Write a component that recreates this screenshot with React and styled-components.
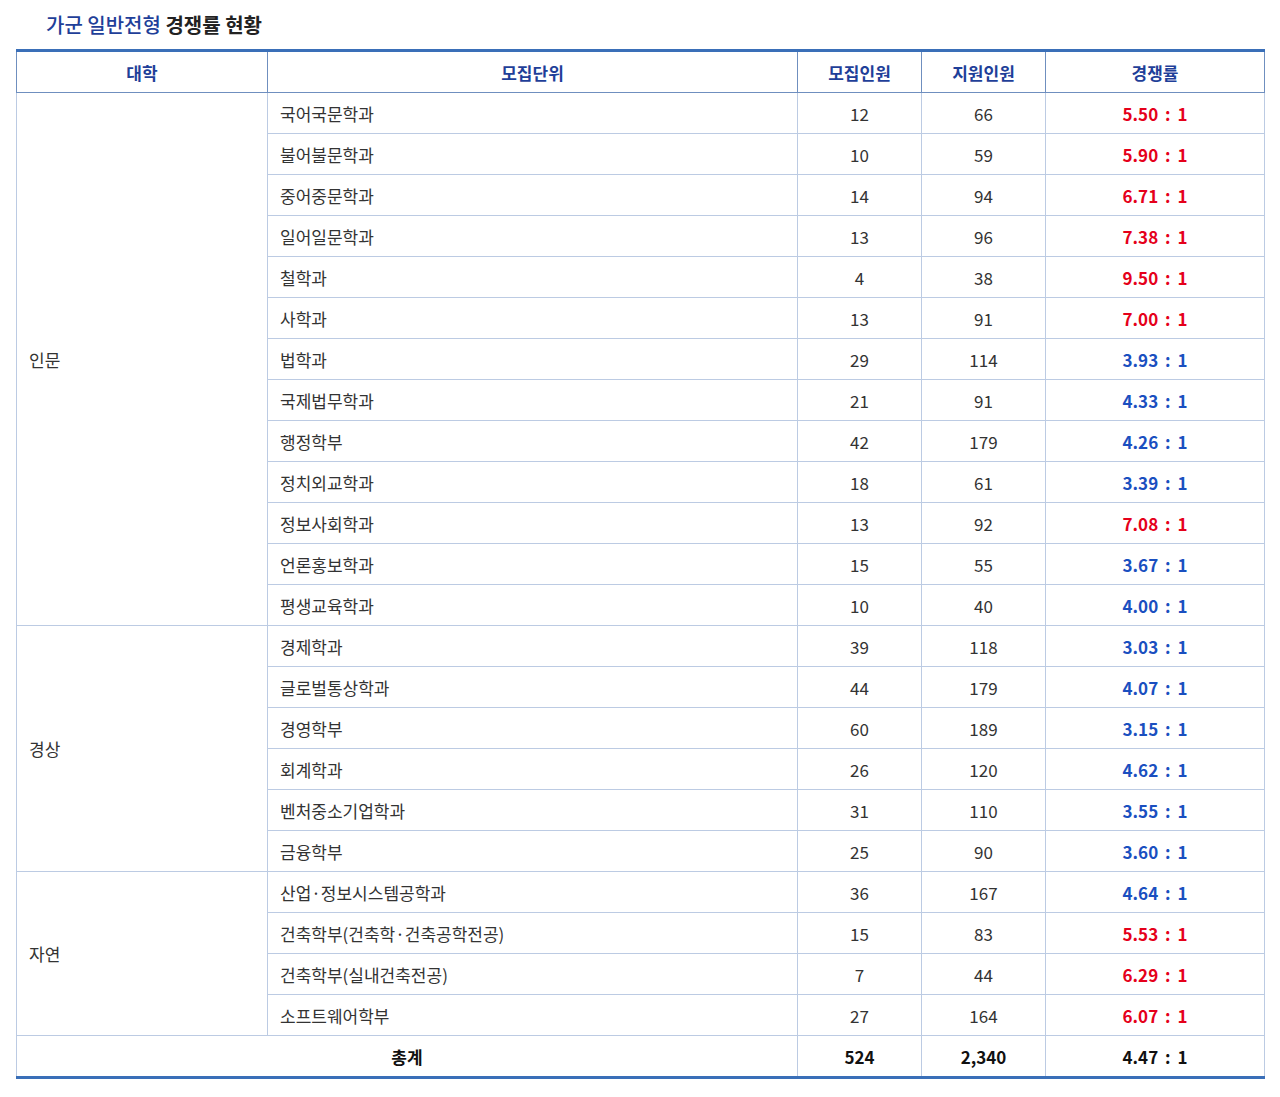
import styled, { createGlobalStyle } from 'styled-components';

const Global = createGlobalStyle`
  body { margin: 0; background: #fff; font-family: "Noto Sans CJK KR", "Noto Sans", sans-serif; }
`;

const Page = styled.div`
  padding: 10px 15px 0 16px;
`;

const Title = styled.h2`
  margin: 0 0 9px 30px;
  font-size: 20px;
  font-weight: 700;
  line-height: 30px;
  color: #222;
  span { color: #1f3f99; font-weight: 500; }
`;

const Table = styled.table`
  width: 1249px;
  border-collapse: collapse;
  border-top: 3px solid #3a6fb8;
  border-bottom: 3px solid #3a6fb8;
  font-size: 17px;
  color: #333;
`;

const Th = styled.th`
  height: 40px;
  border: 1px solid #6f8fbf;
  color: #1f3f99;
  font-weight: 700;
  font-size: 17px;
  padding: 0;
`;

const Td = styled.td`
  height: 40px;
  border: 1px solid #bccbe3;
  padding: 0 12px;
  text-align: ${({ $left }) => ($left ? 'left' : 'center')};
  font-weight: ${({ $bold }) => ($bold ? 700 : 400)};
  color: ${({ $tone }) => ($tone === 'red' ? '#e5001a' : $tone === 'blue' ? '#1a4fc0' : '#333')};
  ${({ $tone }) => $tone && 'font-weight: 700; word-spacing: 3px;'}
  ${({ $total }) => $total && 'color: #111; font-weight: 700; word-spacing: 3px;'}
`;

const groups = [
  ['인문', [
    ['국어국문학과', 12, 66, '5.50', 'red'],
    ['불어불문학과', 10, 59, '5.90', 'red'],
    ['중어중문학과', 14, 94, '6.71', 'red'],
    ['일어일문학과', 13, 96, '7.38', 'red'],
    ['철학과', 4, 38, '9.50', 'red'],
    ['사학과', 13, 91, '7.00', 'red'],
    ['법학과', 29, 114, '3.93', 'blue'],
    ['국제법무학과', 21, 91, '4.33', 'blue'],
    ['행정학부', 42, 179, '4.26', 'blue'],
    ['정치외교학과', 18, 61, '3.39', 'blue'],
    ['정보사회학과', 13, 92, '7.08', 'red'],
    ['언론홍보학과', 15, 55, '3.67', 'blue'],
    ['평생교육학과', 10, 40, '4.00', 'blue'],
  ]],
  ['경상', [
    ['경제학과', 39, 118, '3.03', 'blue'],
    ['글로벌통상학과', 44, 179, '4.07', 'blue'],
    ['경영학부', 60, 189, '3.15', 'blue'],
    ['회계학과', 26, 120, '4.62', 'blue'],
    ['벤처중소기업학과', 31, 110, '3.55', 'blue'],
    ['금융학부', 25, 90, '3.60', 'blue'],
  ]],
  ['자연', [
    ['산업·정보시스템공학과', 36, 167, '4.64', 'blue'],
    ['건축학부(건축학·건축공학전공)', 15, 83, '5.53', 'red'],
    ['건축학부(실내건축전공)', 7, 44, '6.29', 'red'],
    ['소프트웨어학부', 27, 164, '6.07', 'red'],
  ]],
];

export default function App() {
  return (
    <Page>
      <Global />
      <Title><span>가군 일반전형</span> 경쟁률 현황</Title>
      <Table>
        <colgroup>
          <col style={{ width: 251 }} />
          <col style={{ width: 530 }} />
          <col style={{ width: 124 }} />
          <col style={{ width: 124 }} />
          <col />
        </colgroup>
        <thead>
          <tr>
            <Th>대학</Th><Th>모집단위</Th><Th>모집인원</Th><Th>지원인원</Th><Th>경쟁률</Th>
          </tr>
        </thead>
        <tbody>
          {groups.map(([college, rows]) =>
            rows.map((r, i) => (
              <tr key={r[0]}>
                {i === 0 && <Td $left rowSpan={rows.length}>{college}</Td>}
                <Td $left>{r[0]}</Td>
                <Td>{r[1]}</Td>
                <Td>{r[2]}</Td>
                <Td $tone={r[4]}>{r[3]} : 1</Td>
              </tr>
            ))
          )}
          <tr>
            <Td colSpan={2} $total>총계</Td>
            <Td $total>524</Td>
            <Td $total>2,340</Td>
            <Td $total>4.47 : 1</Td>
          </tr>
        </tbody>
      </Table>
    </Page>
  );
}
